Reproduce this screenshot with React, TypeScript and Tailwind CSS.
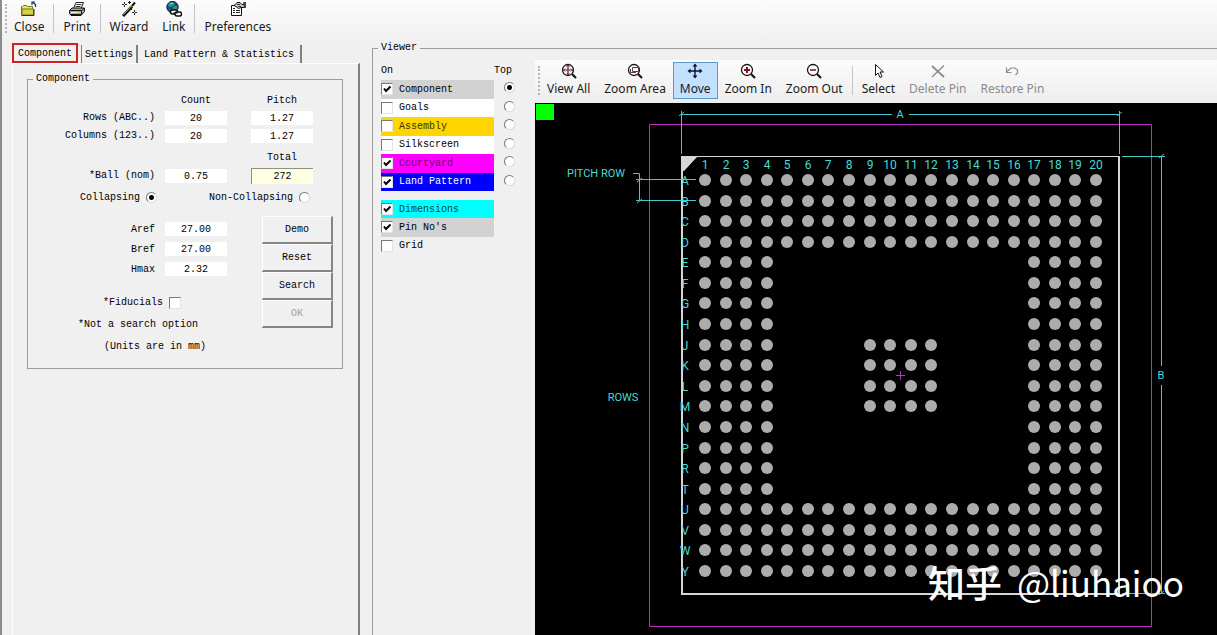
// App.tsx
import React, { useState } from "react";

const rowNames = "ABCDEFGHJKLMNPRTUVWY".split("");

const layers = [
  { name: "Component", bar: "bg-[#d2d2d2] text-black", on: true },
  { name: "Goals", bar: "bg-white text-black", on: false },
  { name: "Assembly", bar: "bg-[#ffd500] text-[#3a3000]", on: false },
  { name: "Silkscreen", bar: "bg-white text-black", on: false },
  { name: "Courtyard", bar: "bg-[#ff00ff] text-[#700070]", on: true },
  { name: "Land Pattern", bar: "bg-[#0000ff] text-white", on: true },
];

const extras = [
  { name: "Dimensions", bar: "bg-[#00ffff] text-[#004848]", on: true },
  { name: "Pin No's", bar: "bg-[#d2d2d2] text-black", on: true },
  { name: "Grid", bar: "text-black", on: false },
];

/* ---------- Icons ---------- */

const CloseIcon = () => (
  <svg width="16" height="16" viewBox="0 0 16 16">
    <path d="M0.5 14.5V5.500h1l1-1h3l1 1h5v9z" fill="#e9e46c" stroke="#77751e" />
    <path d="M1 14V8h11.500v6z" fill="#d6d23e" stroke="#77751e" />
    <path d="M1 14.500h12V8" fill="none" stroke="#33320c" />
    <path d="M14.500 6V3.500L12 1.500M11 4V1h3" fill="none" stroke="#1b2a70" strokeWidth="1.200" />
  </svg>
);

const PrintIcon = () => (
  <svg width="16" height="16" viewBox="0 0 16 16">
    <path d="M4.500 7.500L7 1.500h7.500L12 7.500z" fill="#fff" stroke="#222" />
    <path d="M7.500 3.500h5M6.500 5.500h5" stroke="#333" />
    <path d="M0.500 9.500L3 7h12.500v3.500L12 14.500H2L0.500 12.500z" fill="#a8a8a8" stroke="#111" />
    <path d="M1 9.500h11.500L15 7.500M12.500 9.500v4" fill="none" stroke="#111" />
    <path d="M2 11.500h9.500" stroke="#eee" />
    <path d="M2 13.500h10" stroke="#111" />
    <path d="M9 11h2v1H9z" fill="#d6d23e" />
  </svg>
);

const WizardIcon = () => (
  <svg width="16" height="16" viewBox="0 0 16 16">
    <path d="M2 15L11 5.500" stroke="#111" strokeWidth="3" />
    <path d="M2.500 13.500L10.500 5" stroke="#d0c43c" strokeWidth="1" />
    <path d="M11 5l3-3.500" stroke="#111" strokeWidth="2" />
    <path d="M3.500 1v5M1 3.500h5M8.500 0v3M7 1.500h3M13.500 9v5M11 11.500h5M10 8l1 1" stroke="#222" />
    <path d="M3 3h1v1H3zM13 11h1v1h-1z" fill="#fff" />
  </svg>
);

const LinkIcon = () => (
  <svg width="16" height="16" viewBox="0 0 16 16">
    <circle cx="6.500" cy="6" r="5.700" fill="#1746a0" stroke="#0b1f4d" />
    <path d="M3 2l4-1 2 2-2 2-3 1-2-1zM8 5l3 0 0 3-3 1-1-2zM3 8l3 1-1 2z" fill="#2f9a63" />
    <path d="M4.500 2.500h2" stroke="#bfe6ff" />
    <rect x="4.500" y="9" width="7" height="4" rx="2" fill="#fff" stroke="#111" strokeWidth="1.500" />
    <rect x="9" y="11" width="6.500" height="4" rx="2" fill="#fff" stroke="#111" strokeWidth="1.500" />
    <path d="M7 12h5" stroke="#111" />
  </svg>
);

const PreferencesIcon = () => (
  <svg width="16" height="16" viewBox="0 0 16 16">
    <path d="M1.500 4.500h10v10h-10z" fill="#fff" stroke="#111" />
    <path d="M3 7.500h2M3 9.500h2M3 11.500h2M6 9.500h4M6 11.500h4" stroke="#222" />
    <path d="M4 4.500L7 1.500l3 0 2 2h3.500v3H11L8.500 7.500 6 5.500z" fill="#c6c6c6" stroke="#111" />
    <path d="M7 3.500h3M8 5.500h3" stroke="#333" />
    <path d="M13 1h3v6h-2z" fill="#444" />
  </svg>
);

const Lens = ({ children }: { children?: React.ReactNode }) => (
  <svg width="16" height="16" viewBox="0 0 16 16">
    <circle cx="7" cy="7" r="5.500" fill="#fff" stroke="#141414" strokeWidth="1.300" />
    <path d="M11 11l4 4" stroke="#141414" strokeWidth="2.200" />
    {children}
  </svg>
);

const ViewAllIcon = () => (
  <Lens>
    <path d="M7 1.500v11M1.500 7h11" stroke="#6b1a24" strokeWidth="1.200" />
    <path d="M5.500 4L7 2.500 8.500 4M5.500 10L7 11.500 8.500 10M4 5.500L2.500 7 4 8.500M10 5.500L11.500 7 10 8.500" fill="none" stroke="#6b1a24" strokeWidth="0.800" />
  </Lens>
);

const ZoomAreaIcon = () => (
  <Lens>
    <path d="M5.500 4.500h6v4h-6z" fill="none" stroke="#6b3a44" />
    <path d="M3.500 6v3.500H9" fill="none" stroke="#6b3a44" />
  </Lens>
);

const ZoomInIcon = () => (
  <Lens>
    <path d="M7 4v6M4 7h6" stroke="#8b1020" strokeWidth="2" />
  </Lens>
);

const ZoomOutIcon = () => (
  <Lens>
    <path d="M4 7h6" stroke="#6b1020" strokeWidth="1.500" />
  </Lens>
);

const MoveIcon = () => (
  <svg width="16" height="16" viewBox="0 0 16 16">
    <path d="M8 2v12M2 8h12" stroke="#0d1526" strokeWidth="1.400" />
    <path d="M8 0.500L10.500 3.500h-5zM8 15.500l2.500-3h-5zM0.500 8l3-2.500v5zM15.500 8l-3-2.500v5z" fill="#0d1526" />
  </svg>
);

const SelectIcon = () => (
  <svg width="16" height="16" viewBox="0 0 16 16">
    <path d="M5.500 1.500v11l2.500-2.500 2 4.500 2-1-2-4.500h3.500z" fill="#fff" stroke="#111" />
  </svg>
);

const DeleteIcon = () => (
  <svg width="16" height="16" viewBox="0 0 16 16">
    <path d="M2 3l12 11" stroke="#8a8a8a" strokeWidth="1.800" />
    <path d="M14 2.500L2 14" stroke="#8a8a8a" strokeWidth="1.300" />
  </svg>
);

const RestoreIcon = () => (
  <svg width="16" height="16" viewBox="0 0 16 16">
    <path d="M3 8.500L7 5h4l2.500 2v3L11.500 12" fill="none" stroke="#8e8e8e" strokeWidth="1.200" />
    <path d="M2.500 4.500v5h5" fill="none" stroke="#8e8e8e" strokeWidth="1.200" />
  </svg>
);

/* ---------- Controls ---------- */

interface ToolProps {
  icon: React.ReactNode;
  label: string;
  active?: boolean;
  disabled?: boolean;
}

const Tool: React.FC<ToolProps> = ({ icon, label, active, disabled }) => (
  <button
    type="button"
    disabled={disabled}
    className={`flex flex-col items-center border px-[6px] font-['Noto_Sans',sans-serif] text-[12px] leading-[19px] whitespace-nowrap ${
      active ? "border-[#5b9bc9] bg-[#c2e0ff]" : "border-transparent"
    } ${disabled ? "text-[#8b8b8b]" : "text-[#1a1a1a]"}`}
  >
    {icon}
    {label}
  </button>
);

const Grip = () => <div className="my-1 w-0 border-l-2 border-dotted border-[#b4b4b4]" />;

const Divider = () => <div className="mx-[2px] my-1 w-px bg-[#c4c4c4]" />;

const Check = ({ id, on }: { id: string; on?: boolean }) => (
  <span className="relative flex">
    <input
      id={id}
      type="checkbox"
      defaultChecked={on}
      className="peer size-3 appearance-none border border-t-[#777] border-l-[#777] border-r-[#e4e4e4] border-b-[#e4e4e4] bg-white"
    />
    <svg viewBox="0 0 12 12" className="pointer-events-none absolute inset-0 hidden size-3 peer-checked:block">
      <path d="M3 5.500L5 8l4.500-4.500" fill="none" stroke="#000" strokeWidth="2" />
    </svg>
  </span>
);

const radioClass =
  "size-[11px] appearance-none rounded-full border border-t-[#777] border-l-[#777] border-r-[#dcdcdc] border-b-[#dcdcdc] bg-white checked:bg-[radial-gradient(circle,#000_2px,#fff_3px)]";

const inputClass = "h-[14px] w-[62px] bg-white text-center";

const Field = ({ id, label, value }: { id: string; label: string; value: string }) => (
  <div className="flex h-5 items-center">
    <label htmlFor={id} className="w-[137px] pr-[10px] text-right">
      {label}
    </label>
    <input id={id} defaultValue={value} className={inputClass} />
  </div>
);

const LayerBar = ({ name, bar, on }: { name: string; bar: string; on: boolean }) => (
  <div className={`flex w-[113px] items-center gap-[6px] ${bar}`}>
    <Check id={`layer-${name}`} on={on} />
    <label htmlFor={`layer-${name}`}>{name}</label>
  </div>
);

/* ---------- Left panel ---------- */

const ComponentForm = () => (
  <fieldset className="mr-[15px] ml-[14px] border border-[#9c9c9c] pb-[10px]">
    <legend className="ml-[5px] px-[3px] leading-4">Component</legend>
    <div className="grid grid-cols-[137px_86px_62px] items-center pt-[6px]">
      <span />
      <span className="w-[62px] text-center leading-4">Count</span>
      <span className="text-center leading-4">Pitch</span>

      <label htmlFor="rows" className="pr-[10px] text-right leading-[18px]">Rows (ABC..)</label>
      <input id="rows" defaultValue="20" className={inputClass} />
      <input aria-label="Row pitch" defaultValue="1.27" className={inputClass} />

      <label htmlFor="columns" className="pr-[10px] text-right leading-[18px]">Columns (123..)</label>
      <input id="columns" defaultValue="20" className={inputClass} />
      <input aria-label="Column pitch" defaultValue="1.27" className={inputClass} />
    </div>
    <div className="grid grid-cols-[137px_86px_62px] items-center pt-[5px]">
      <label htmlFor="total" className="col-start-3 text-center leading-4">Total</label>
      <label htmlFor="ball" className="pr-[10px] text-right leading-5">*Ball (nom)</label>
      <input id="ball" defaultValue="0.75" className={inputClass} />
      <input
        id="total"
        readOnly
        value="272"
        className="h-4 w-[62px] border-t border-l border-[#8f8f80] bg-[#ffffe1] text-center"
      />
    </div>
    <div className="flex h-[22px] items-center gap-[52px] pl-[52px]">
      <label className="flex items-center gap-[6px]">
        Collapsing
        <input type="radio" name="ball-type" defaultChecked className={radioClass} />
      </label>
      <label className="flex items-center gap-[6px]">
        Non-Collapsing
        <input type="radio" name="ball-type" className={radioClass} />
      </label>
    </div>
    <div className="flex justify-between pt-2 pr-[9px]">
      <div className="pt-[3px]">
        <Field id="aref" label="Aref" value="27.00" />
        <Field id="bref" label="Bref" value="27.00" />
        <Field id="hmax" label="Hmax" value="2.32" />
        <div className="flex items-center gap-[6px] pt-[13px] pl-[75px] leading-[22px]">
          <label htmlFor="fiducials">*Fiducials</label>
          <Check id="fiducials" />
        </div>
        <p className="pl-[50px] leading-[22px]">*Not a search option</p>
        <p className="pl-[76px] leading-[22px]">(Units are in mm)</p>
      </div>
      <div className="flex flex-col">
        {["Demo", "Reset", "Search", "OK"].map((name) => (
          <button
            key={name}
            type="button"
            disabled={name === "OK"}
            className="h-7 w-[71px] border-t border-r-2 border-b-2 border-l border-t-white border-r-[#858585] border-b-[#858585] border-l-white disabled:text-[#a0a0a0]"
          >
            {name}
          </button>
        ))}
      </div>
    </div>
  </fieldset>
);

/* ---------- Footprint drawing ---------- */

const hasPin = (row: number, col: number) => {
  const edge = row < 4 || row > 15 || col < 4 || col > 15;
  const center = row > 7 && row < 12 && col > 7 && col < 12;
  return edge || center;
};

const pinX = (col: number) => 170 + Math.round((col * 391) / 19);
const pinY = (row: number) => 77 + Math.round((row * 391) / 19);

const Footprint = () => (
  <svg viewBox="0 0 682 532" className="block w-full bg-black font-[Roboto,sans-serif]">
    <rect x="1" y="1" width="18" height="16" fill="#00ff00" />
    <path d="M114.500 21.500h502v502h-502z" fill="none" stroke="#c030c0" />

    {/* Body outline with pin 1 corner */}
    <path d="M147 53v438h437V53" fill="none" stroke="#d6d6d6" strokeWidth="2" />
    <path d="M146 53.500h439" stroke="#d6d6d6" />
    <path d="M147 53h16l-14 15h-2z" fill="#d6d6d6" />

    {rowNames.map((name, row) =>
      rowNames.map((_, col) =>
        hasPin(row, col) ? (
          <circle key={`${name}${col}`} cx={pinX(col)} cy={pinY(row)} r="6" fill="#acacac" />
        ) : null
      )
    )}

    {/* Dimension lines */}
    <g stroke="#46c8c8" fill="none">
      <path d="M146.500 8v43M584.500 8v43M146 11.500h211M374 11.500h211" />
      <path d="M144 13l5-4M582 13l5-4" />
      <path d="M587 53.500h43M587 490.500h43M626.500 53v210M626.500 282v209" />
      <path d="M624 55l5-4M624 492l5-4" />
      <path d="M98 70.500h6.500V98M101 76.500h60M101 97.500h60M102 79l5-4M102 100l5-4" />
    </g>

    <g fill="#46dcd2" fontSize="12" textAnchor="middle">
      {rowNames.map((name, i) => (
        <text key={name} x="150" y={pinY(i) + 5}>
          {name}
        </text>
      ))}
      {rowNames.map((name, i) => (
        <text key={name} x={pinX(i)} y="66">
          {i + 1}
        </text>
      ))}
      <text x="365" y="15" fontSize="11">A</text>
      <text x="626" y="276" fontSize="11">B</text>
      <text x="61" y="74" fontSize="11">PITCH ROW</text>
      <text x="88" y="298" fontSize="11">ROWS</text>
    </g>

    <path d="M361 272.500h9M365.500 268v9" stroke="#c030c0" />

    <g fill="#fff" className="font-['Noto_Sans_CJK_SC',sans-serif]">
      <text x="393" y="495" fontSize="37" fontWeight="500">知乎</text>
      <text x="482" y="494" fontSize="35">@liuhaioo</text>
    </g>
  </svg>
);

const Viewer = () => {
  const [top, setTop] = useState("Component");

  return (
    <fieldset className="ml-3 min-w-0 flex-1 border-t border-l border-[#9c9c9c]">
      <legend className="ml-[5px] px-[3px] leading-4">Viewer</legend>
      <div className="flex pt-1">
        <div className="w-[162px] shrink-0 pt-[2px] pl-2">
          <div className="flex justify-between pr-[23px] leading-[18px]">
            <span>On</span>
            <span>Top</span>
          </div>
          <div className="grid h-[111px] grid-rows-6">
            {layers.map((layer) => (
              <div key={layer.name} className="flex gap-[10px]">
                <LayerBar {...layer} />
                <input
                  type="radio"
                  name="top-layer"
                  aria-label={`${layer.name} on top`}
                  checked={top === layer.name}
                  onChange={() => setTop(layer.name)}
                  className={`mt-[2px] ${radioClass}`}
                />
              </div>
            ))}
          </div>
          <div className="mt-[9px] grid h-[55px] grid-rows-3">
            {extras.map((extra) => (
              <LayerBar key={extra.name} {...extra} />
            ))}
          </div>
        </div>
        <div className="min-w-0 flex-1">
          <div className="flex bg-linear-to-b from-[#fcfcfc] to-[#ededed] pt-[2px] pb-1 pl-[3px]">
            <Grip />
            <Tool icon={<ViewAllIcon />} label="View All" />
            <Tool icon={<ZoomAreaIcon />} label="Zoom Area" />
            <Tool icon={<MoveIcon />} label="Move" active />
            <Tool icon={<ZoomInIcon />} label="Zoom In" />
            <Tool icon={<ZoomOutIcon />} label="Zoom Out" />
            <Divider />
            <Tool icon={<SelectIcon />} label="Select" />
            <Tool icon={<DeleteIcon />} label="Delete Pin" disabled />
            <Tool icon={<RestoreIcon />} label="Restore Pin" disabled />
          </div>
          <Footprint />
        </div>
      </div>
    </fieldset>
  );
};

const App: React.FC = () => {
  return (
    <div className="flex min-h-screen flex-col overflow-hidden border-l-2 border-[#8c8c8c] bg-[#f0f0f0] font-['Liberation_Mono',monospace] text-[10px] text-black">
      {/* Main toolbar */}
      <header className="flex bg-linear-to-b from-[#fcfcfc] to-[#f0f0f0] pb-[3px] pl-[3px]">
        <Grip />
        <Tool icon={<CloseIcon />} label="Close" />
        <Divider />
        <Tool icon={<PrintIcon />} label="Print" />
        <Divider />
        <Tool icon={<WizardIcon />} label="Wizard" />
        <Tool icon={<LinkIcon />} label="Link" />
        <Divider />
        <Tool icon={<PreferencesIcon />} label="Preferences" />
      </header>

      <main className="flex flex-1">
        <section className="flex w-[358px] shrink-0 flex-col pt-[3px] pl-[10px]">
          <nav className="flex items-end">
            <button type="button" className="h-5 w-[66px] border-2 border-[#cc2222]">
              Component
            </button>
            <button type="button" className="ml-[3px] h-[18px] border-r-2 border-l border-[#808080] px-[3px]">
              Settings
            </button>
            <button type="button" className="h-[18px] border-r-2 border-[#808080] px-[6px]">
              Land Pattern &amp; Statistics
            </button>
          </nav>
          <div className="flex-1 border-t border-r-2 border-l border-t-white border-r-[#808080] border-l-white pt-[7px]">
            <ComponentForm />
          </div>
        </section>
        <Viewer />
      </main>
    </div>
  );
};

export default App;
